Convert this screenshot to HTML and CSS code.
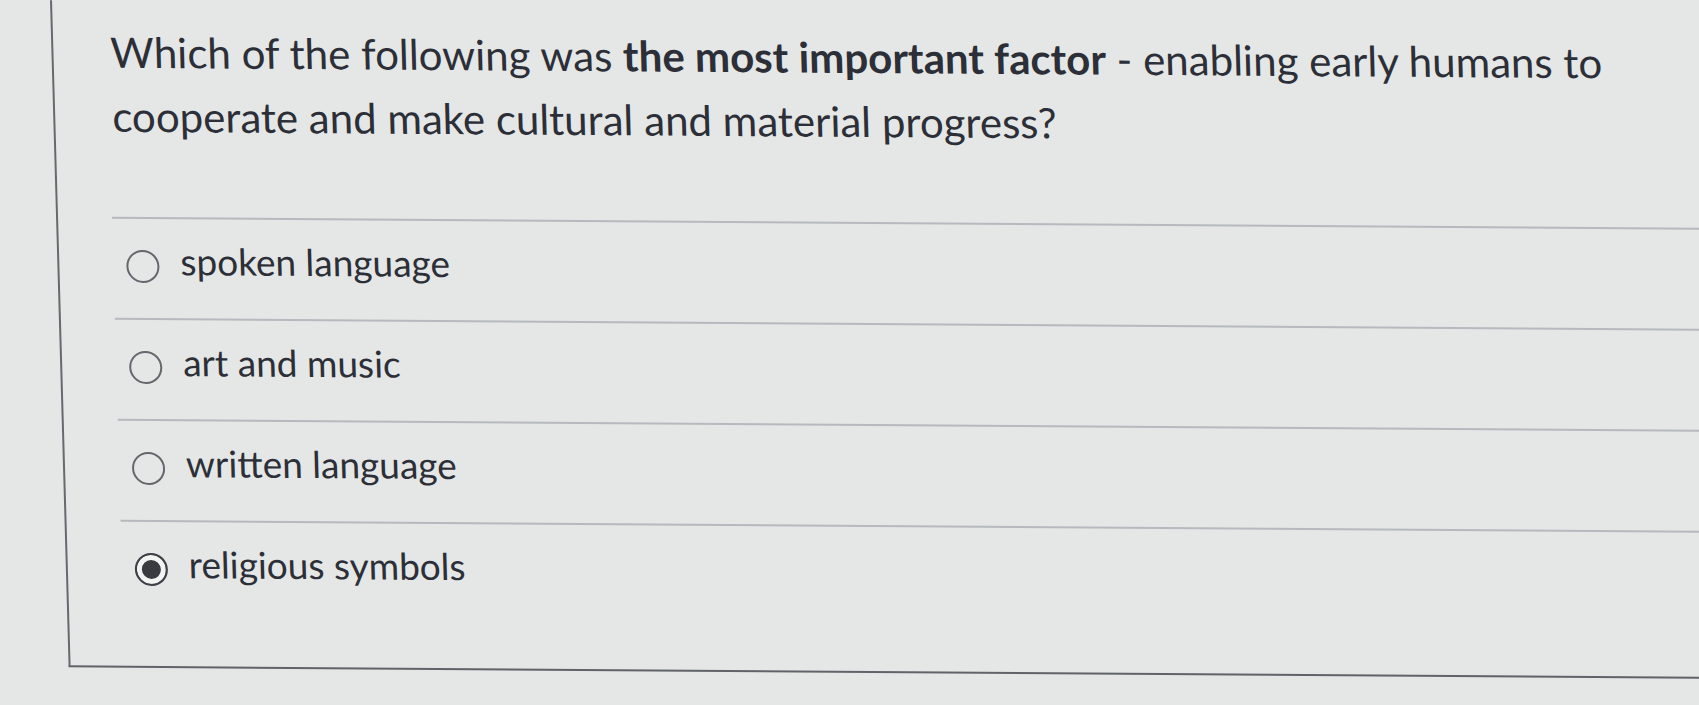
FILE: index.html
```html
<!DOCTYPE html>
<html lang="en">
<head>
<meta charset="utf-8">
<title>Quiz question</title>
<link rel="stylesheet" href="styles.css">
</head>
<body>
<div class="page">
  <div class="card">
    <div class="question">Which of the following was <strong>the most important factor</strong> - enabling early humans to cooperate and make cultural and material progress?</div>
    <div class="answers">
      <label class="answer"><span class="radio"></span><span class="answer-text">spoken language</span></label>
      <label class="answer"><span class="radio"></span><span class="answer-text">art and music</span></label>
      <label class="answer"><span class="radio"></span><span class="answer-text">written language</span></label>
      <label class="answer"><span class="radio radio-checked"></span><span class="answer-text">religious symbols</span></label>
    </div>
  </div>
</div>
</body>
</html>
```

FILE: styles.css
```css
html, body {
  margin: 0;
  padding: 0;
  height: 100%;
  overflow: hidden;
  background: #e4e7e5;
}

body {
  font-family: Lato, "Open Sans", sans-serif;
  color: #2c2f37;
}

.page {
  width: 100%;
  height: 705px;
  transform-origin: 0 0;
  transform: skew(1.6deg, 0.4deg);
}

.card {
  margin-left: 50px;
  box-sizing: border-box;
  height: 667px;
  border-left: 2px solid #66696e;
  border-bottom: 2px solid #606368;
  padding-top: 19px;
}

.question {
  margin-left: 57px;
  max-width: 1560px;
  font-size: 42px;
  line-height: 64px;
}

.question strong {
  font-weight: 700;
}

.answers {
  margin-top: 69px;
  margin-left: 54px;
}

.answer {
  display: flex;
  align-items: flex-start;
  box-sizing: border-box;
  height: 101px;
  padding-top: 15px;
  border-top: 2px solid #b6b9bd;
}

.radio {
  flex: none;
  box-sizing: border-box;
  width: 33px;
  height: 33px;
  margin-top: 16px;
  margin-left: 13px;
  border: 2px solid #64676c;
  border-radius: 50%;
}

.radio-checked {
  border-color: #3f4146;
  background: #393b40;
  box-shadow: inset 0 0 0 5px #f2f3f3;
}

.answer-text {
  margin-left: 21px;
  font-size: 37px;
  line-height: 54px;
}
```
